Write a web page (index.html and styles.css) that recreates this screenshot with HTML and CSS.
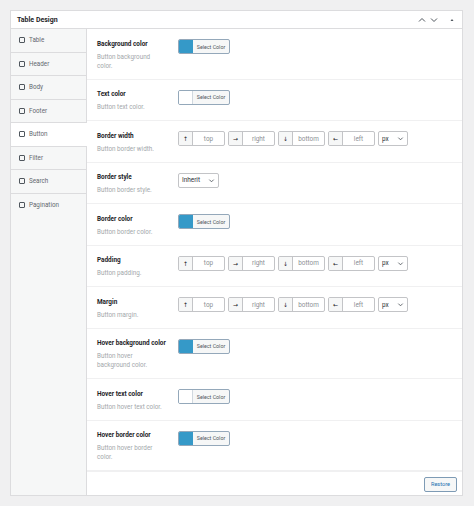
FILE: index.html
```html
<!DOCTYPE html>
<html>
<head>
<meta charset="utf-8">
<link rel="stylesheet" href="styles.css">
</head>
<body>
<div class="panel">
  <div class="panel-head">
    <span class="panel-title">Table Design</span>
    <div class="head-icons">
      <svg class="hicon" viewBox="0 0 8 8"><path d="M1 5.5 L4 2.5 L7 5.5" fill="none" stroke="#50575e" stroke-width="1"/></svg>
      <svg class="hicon" viewBox="0 0 8 8"><path d="M1 2.5 L4 5.5 L7 2.5" fill="none" stroke="#50575e" stroke-width="1"/></svg>
      <svg class="hicon small" viewBox="0 0 8 8"><path d="M2.5 5 L4 3 L5.5 5 Z" fill="#50575e"/></svg>
    </div>
  </div>
  <div class="panel-body">
    <ul class="sidebar">
      <li class="tab"><span class="cb"></span>Table</li>
      <li class="tab"><span class="cb"></span>Header</li>
      <li class="tab"><span class="cb"></span>Body</li>
      <li class="tab"><span class="cb"></span>Footer</li>
      <li class="tab active"><span class="cb"></span>Button</li>
      <li class="tab"><span class="cb"></span>Filter</li>
      <li class="tab"><span class="cb"></span>Search</li>
      <li class="tab last"><span class="cb"></span>Pagination</li>
    </ul>
    <div class="main">
      <div class="row">
        <div class="label-col"><div class="label">Background color</div><div class="desc">Button background color.</div></div>
        <div class="ctrl"><div class="cpick"><span class="swatch blue"></span><span class="ctext">Select Color</span></div></div>
      </div>
      <div class="row">
        <div class="label-col"><div class="label">Text color</div><div class="desc">Button text color.</div></div>
        <div class="ctrl"><div class="cpick"><span class="swatch"></span><span class="ctext">Select Color</span></div></div>
      </div>
      <div class="row">
        <div class="label-col"><div class="label">Border width</div><div class="desc">Button border width.</div></div>
        <div class="ctrl dims">
          <div class="dim"><span class="arr">↑</span><span class="dinput">top</span></div>
          <div class="dim"><span class="arr">→</span><span class="dinput">right</span></div>
          <div class="dim"><span class="arr">↓</span><span class="dinput">bottom</span></div>
          <div class="dim"><span class="arr">←</span><span class="dinput">left</span></div>
          <div class="sel unit"><span>px</span><svg class="chev" viewBox="0 0 8 8"><path d="M1.5 3 L4 5.5 L6.5 3" fill="none" stroke="#50575e" stroke-width="1"/></svg></div>
        </div>
      </div>
      <div class="row">
        <div class="label-col"><div class="label">Border style</div><div class="desc">Button border style.</div></div>
        <div class="ctrl"><div class="sel style"><span>Inherit</span><svg class="chev" viewBox="0 0 8 8"><path d="M1.5 3 L4 5.5 L6.5 3" fill="none" stroke="#50575e" stroke-width="1"/></svg></div></div>
      </div>
      <div class="row">
        <div class="label-col"><div class="label">Border color</div><div class="desc">Button border color.</div></div>
        <div class="ctrl"><div class="cpick"><span class="swatch blue"></span><span class="ctext">Select Color</span></div></div>
      </div>
      <div class="row">
        <div class="label-col"><div class="label">Padding</div><div class="desc">Button padding.</div></div>
        <div class="ctrl dims">
          <div class="dim"><span class="arr">↑</span><span class="dinput">top</span></div>
          <div class="dim"><span class="arr">→</span><span class="dinput">right</span></div>
          <div class="dim"><span class="arr">↓</span><span class="dinput">bottom</span></div>
          <div class="dim"><span class="arr">←</span><span class="dinput">left</span></div>
          <div class="sel unit"><span>px</span><svg class="chev" viewBox="0 0 8 8"><path d="M1.5 3 L4 5.5 L6.5 3" fill="none" stroke="#50575e" stroke-width="1"/></svg></div>
        </div>
      </div>
      <div class="row">
        <div class="label-col"><div class="label">Margin</div><div class="desc">Button margin.</div></div>
        <div class="ctrl dims">
          <div class="dim"><span class="arr">↑</span><span class="dinput">top</span></div>
          <div class="dim"><span class="arr">→</span><span class="dinput">right</span></div>
          <div class="dim"><span class="arr">↓</span><span class="dinput">bottom</span></div>
          <div class="dim"><span class="arr">←</span><span class="dinput">left</span></div>
          <div class="sel unit"><span>px</span><svg class="chev" viewBox="0 0 8 8"><path d="M1.5 3 L4 5.5 L6.5 3" fill="none" stroke="#50575e" stroke-width="1"/></svg></div>
        </div>
      </div>
      <div class="row">
        <div class="label-col"><div class="label">Hover background color</div><div class="desc">Button hover background color.</div></div>
        <div class="ctrl"><div class="cpick"><span class="swatch blue"></span><span class="ctext">Select Color</span></div></div>
      </div>
      <div class="row">
        <div class="label-col"><div class="label">Hover text color</div><div class="desc">Button hover text color.</div></div>
        <div class="ctrl"><div class="cpick"><span class="swatch"></span><span class="ctext">Select Color</span></div></div>
      </div>
      <div class="row">
        <div class="label-col"><div class="label">Hover border color</div><div class="desc">Button hover border color.</div></div>
        <div class="ctrl"><div class="cpick"><span class="swatch blue"></span><span class="ctext">Select Color</span></div></div>
      </div>
      <div class="spacer"></div>
      <div class="footer"><button class="restore">Restore</button></div>
    </div>
  </div>
</div>
</body>
</html>
```

FILE: styles.css
```css
* { box-sizing: border-box; }
html, body { margin: 0; padding: 0; }
body {
  background: #f0f0f1;
  font-family: Roboto, "Liberation Sans", sans-serif;
  padding: 10px 11px 10px 10px;
  width: 474px;
  height: 506px;
}
.panel {
  width: 453px;
  height: 486px;
  background: #fff;
  border: 1px solid #dcdcde;
  display: flex;
  flex-direction: column;
}
.panel-head {
  height: 18px;
  flex: none;
  border-bottom: 1px solid #dcdcde;
  display: flex;
  align-items: center;
  justify-content: space-between;
  padding: 0 6px 0 6px;
}
.panel-title {
  font-size: 7px;
  font-weight: 700;
  color: #1d2327;
}
.head-icons { display: flex; align-items: center; gap: 4px; }
.hicon { width: 8px; height: 8px; display: block; }
.hicon.small { margin-left: 6px; }
.panel-body { flex: 1; display: flex; min-height: 0; }
.sidebar {
  list-style: none;
  margin: 0;
  padding: 0;
  width: 76px;
  flex: none;
  background: #f6f7f7;
  border-right: 1px solid #dcdcde;
}
.tab {
  height: 23.5px;
  display: flex;
  align-items: center;
  padding-left: 8px;
  font-size: 6.3px;
  color: #646970;
  border-bottom: 1px solid #dcdcde;
}
.tab.last { border-bottom: none; }
.tab.active {
  background: #fff;
  margin-right: -1px;
}
.cb {
  width: 6px;
  height: 6px;
  border: 1px solid #50575e;
  border-radius: 1px;
  margin-right: 4px;
  flex: none;
}
.main { flex: 1; display: flex; flex-direction: column; }
.row {
  display: flex;
  padding: 9.5px 0 8px 10px;
  border-bottom: 1px solid #f0f0f1;
}
.label-col { width: 81px; flex: none; }
.label {
  font-size: 6.4px;
  font-weight: 700;
  line-height: 11px;
  color: #1d2327;
  white-space: nowrap;
}
.desc {
  margin-top: 3px;
  font-size: 6.3px;
  line-height: 9px;
  color: #a3a7ab;
  width: 70px;
}
.ctrl { padding-top: 0.5px; }
.cpick {
  width: 52px;
  height: 15px;
  display: flex;
  border: 1px solid #94a8ba;
  border-radius: 2px;
  overflow: hidden;
  background: #f6f7f7;
}
.swatch {
  width: 14px;
  flex: none;
  background: #fff;
  border-right: 1px solid #d0d8df;
}
.swatch.blue { background: #3599c8; border-right-color: #3599c8; }
.ctext {
  flex: 1;
  font-size: 5.3px;
  color: #50575e;
  display: flex;
  align-items: center;
  justify-content: center;
}
.dims { display: flex; gap: 3px; }
.dim {
  width: 47px;
  height: 15px;
  display: flex;
  border: 1px solid #c3c4c7;
  border-radius: 2px;
  overflow: hidden;
}
.arr {
  width: 14px;
  flex: none;
  background: #f6f7f7;
  border-right: 1px solid #c3c4c7;
  font-size: 6px;
  color: #1d2327;
  display: flex;
  align-items: center;
  justify-content: center;
  font-family: "DejaVu Sans", sans-serif;
}
.dinput {
  flex: 1;
  font-size: 6.4px;
  color: #8c8f94;
  display: flex;
  align-items: center;
  justify-content: center;
}
.sel {
  height: 15px;
  border: 1px solid #c3c4c7;
  border-radius: 2px;
  display: flex;
  align-items: center;
  justify-content: space-between;
  padding: 0 3px 0 3px;
  font-size: 6.4px;
  color: #2c3338;
  background: #fff;
}
.sel.unit { width: 30px; }
.sel.style { width: 41px; }
.chev { width: 7px; height: 7px; display: block; }
.spacer { flex: 1; }
.footer {
  height: 25px;
  flex: none;
  border-top: 1px solid #f0f0f1;
  display: flex;
  align-items: center;
  justify-content: flex-end;
  padding-right: 5px;
}
.restore {
  width: 33px;
  height: 15px;
  padding: 0;
  font-family: Roboto, "Liberation Sans", sans-serif;
  font-size: 5.6px;
  color: #2271b1;
  background: #f6f7f7;
  border: 1px solid #7e9bb5;
  border-radius: 2px;
}
```
